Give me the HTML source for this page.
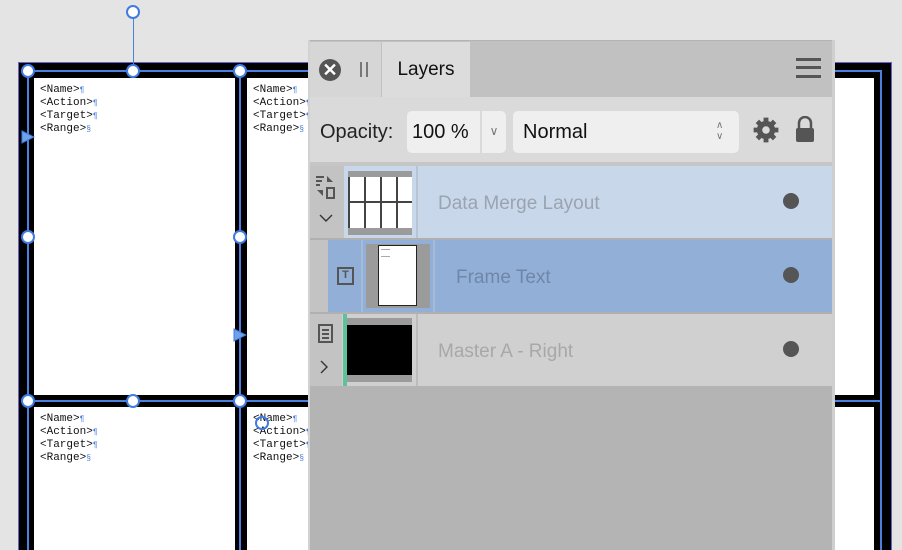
<!DOCTYPE html>
<html><head><meta charset="utf-8"><style>
body{margin:0;width:902px;height:550px;overflow:hidden;background:#e4e4e4;position:relative;font-family:"Liberation Sans",sans-serif}
.a{position:absolute}
.cell{position:absolute;background:#fff;font-family:"Liberation Mono",monospace;font-size:11px;line-height:13px;color:#111;padding:6px 0 0 6px;box-sizing:border-box}
.cell i{font-style:normal;color:#4a7fd6;font-size:8px}
.h{position:absolute;width:10px;height:10px;border:2px solid #3f7be0;border-radius:50%;background:#fff;margin:-7px 0 0 -7px}
.bl{position:absolute;background:#4a80e0}
.row{position:absolute;left:310px;width:522px;height:72px}
.name{position:absolute;font-size:19px;top:27px}
.dot{position:absolute;left:473px;top:27px;width:16px;height:16px;border-radius:50%;background:#555}
</style></head><body>
<div class="a" style="left:18px;top:62px;width:874px;height:488px;background:#000;border:1px solid #6a62c8;border-bottom:none;box-sizing:border-box"></div>
<div class="cell" style="left:34px;top:78px;width:201px;height:317px">&lt;Name&gt;<i>¶</i><br>&lt;Action&gt;<i>¶</i><br>&lt;Target&gt;<i>¶</i><br>&lt;Range&gt;<i>§</i></div>
<div class="cell" style="left:247px;top:78px;width:300px;height:317px">&lt;Name&gt;<i>¶</i><br>&lt;Action&gt;<i>¶</i><br>&lt;Target&gt;<i>¶</i><br>&lt;Range&gt;<i>§</i></div>
<div class="cell" style="left:34px;top:407px;width:201px;height:143px">&lt;Name&gt;<i>¶</i><br>&lt;Action&gt;<i>¶</i><br>&lt;Target&gt;<i>¶</i><br>&lt;Range&gt;<i>§</i></div>
<div class="cell" style="left:247px;top:407px;width:300px;height:143px">&lt;Name&gt;<i>¶</i><br>&lt;Action&gt;<i>¶</i><br>&lt;Target&gt;<i>¶</i><br>&lt;Range&gt;<i>§</i></div>
<div class="cell" style="left:835px;top:78px;width:39px;height:317px"></div>
<div class="cell" style="left:835px;top:407px;width:39px;height:143px"></div>
<div class="bl" style="left:28px;top:70px;width:854px;height:2px"></div>
<div class="bl" style="left:28px;top:400px;width:854px;height:2px"></div>
<div class="bl" style="left:27px;top:71px;width:2px;height:479px"></div>
<div class="bl" style="left:239px;top:71px;width:2px;height:479px"></div>
<div class="bl" style="left:880px;top:71px;width:2px;height:479px"></div>
<div class="bl" style="left:133px;top:14px;width:1px;height:57px"></div>
<div class="h" style="left:133px;top:12px"></div>
<div class="h" style="left:28px;top:71px"></div><div class="h" style="left:133px;top:71px"></div><div class="h" style="left:240px;top:71px"></div>
<div class="h" style="left:28px;top:237px"></div><div class="h" style="left:240px;top:237px"></div>
<div class="h" style="left:28px;top:401px"></div><div class="h" style="left:133px;top:401px"></div><div class="h" style="left:240px;top:401px"></div>
<div class="h" style="left:262px;top:423px;background:transparent"></div>
<svg class="a" style="left:21px;top:130px" width="14" height="14"><path d="M1 1L13 7L1 13Z" fill="#6fa0ea" stroke="#3f7be0"/></svg>
<svg class="a" style="left:233px;top:328px" width="14" height="14"><path d="M1 1L13 7L1 13Z" fill="#6fa0ea" stroke="#3f7be0"/></svg>

<div class="a" style="left:308px;top:40px;width:527px;height:510px;background:#b4b4b4;border-left:2px solid #d2d2d2;border-right:3px solid #cfcfcf;box-sizing:border-box"></div>
<div class="a" style="left:310px;top:41px;width:522px;height:56px;background:#c1c1c1"></div>
<div class="a" style="left:310px;top:42px;width:71px;height:56px;background:#d6d6d6"></div>
<div class="a" style="left:382px;top:42px;width:88px;height:56px;background:#dcdcdc;font-size:19px;line-height:56px;text-align:center;color:#111">Layers</div>
<div class="a" style="left:319px;top:59px;width:22px;height:22px;border-radius:50%;background:#555;color:#fff;text-align:center;line-height:22px;font-size:18px;font-weight:bold">✕</div>
<div class="a" style="left:360px;top:62px;width:2px;height:15px;background:#777"></div>
<div class="a" style="left:366px;top:62px;width:2px;height:15px;background:#777"></div>
<div class="a" style="left:796px;top:58px;width:25px;height:3px;background:#555"></div>
<div class="a" style="left:796px;top:66px;width:25px;height:3px;background:#555"></div>
<div class="a" style="left:796px;top:75px;width:25px;height:3px;background:#555"></div>
<div class="a" style="left:310px;top:97px;width:522px;height:65px;background:#dadada"></div>
<div class="a" style="left:320px;top:121px;font-size:20px;color:#222">Opacity:</div>
<div class="a" style="left:407px;top:111px;width:73px;height:42px;background:#efefef;border-radius:5px 0 0 5px;font-size:20px;line-height:42px;padding-left:5px;box-sizing:border-box;color:#111">100 %</div>
<div class="a" style="left:482px;top:111px;width:24px;height:42px;background:#efefef;border-radius:0 5px 5px 0;color:#777;text-align:center;line-height:40px;font-size:12px">∨</div>
<div class="a" style="left:513px;top:111px;width:226px;height:42px;background:#efefef;border-radius:5px;font-size:20px;line-height:42px;padding-left:10px;box-sizing:border-box;color:#111">Normal</div>
<div class="a" style="left:716px;top:120px;color:#777;font-size:10px;line-height:11px">∧<br>∨</div>
<svg class="a" style="left:752px;top:116px" width="28" height="28" viewBox="0 0 26 26"><g fill="#555"><circle cx="13" cy="13" r="8.5"/><g stroke="#555" stroke-width="4.5"><path d="M13 1.5V24.5M1.5 13H24.5M5 5L21 21M21 5L5 21"/></g></g><circle cx="13" cy="13" r="3.5" fill="#dadada"/></svg>
<svg class="a" style="left:795px;top:116px" width="20" height="27"><path d="M4 12V7a6 6 0 0 1 12 0V12" fill="none" stroke="#555" stroke-width="2.5"/><rect x="1" y="12" width="18" height="14" rx="2" fill="#555"/></svg>

<div class="a" style="left:310px;top:162px;width:522px;height:4px;background:#c6c6c6"></div>
<div class="row" style="top:166px;background:#c9d7ea">
 <div class="a" style="left:0;top:0;width:34px;height:72px;background:#c3c3c3"></div>
 <div class="a" style="left:106px;top:0;width:2px;height:72px;background:#b8c4d4"></div>
 <div class="a" style="left:38px;top:5px;width:64px;height:64px;background:#9b9b9b"></div>
 <div class="a" style="left:38px;top:11px;width:64px;height:51px;background:#fff;background-image:linear-gradient(90deg,#444 2px,transparent 2px);background-size:16px 100%"></div>
 <div class="a" style="left:38px;top:35px;width:64px;height:2px;background:#444"></div>
 <svg class="a" style="left:5px;top:8px" width="24" height="56"><g fill="#555"><rect x="1" y="2" width="8" height="2"/><rect x="1" y="6" width="6" height="2"/><rect x="1" y="10" width="4" height="2"/><path d="M12 2L18 8H12Z"/><path d="M2 16L8 16L8 22Z"/></g><rect x="12" y="14" width="7" height="10" fill="none" stroke="#555" stroke-width="2"/><path d="M5 41L11 47L17 41" fill="none" stroke="#333" stroke-width="1.4"/></svg>
 <div class="name" style="left:128px;color:#9aa4b1">Data Merge Layout</div>
 <div class="dot"></div>
</div>
<div class="a" style="left:310px;top:238px;width:522px;height:2px;background:#b0b0b0"></div>
<div class="row" style="top:240px;background:#92b0d7">
 <div class="a" style="left:0;top:0;width:18px;height:72px;background:#c3c3c3"></div>
 <div class="a" style="left:51px;top:0;width:2px;height:72px;background:#a5bcd9"></div>
 <div class="a" style="left:123px;top:0;width:2px;height:72px;background:#a5bcd9"></div>
 <div class="a" style="left:56px;top:4px;width:64px;height:64px;background:#9b9b9b"></div>
 <div class="a" style="left:68px;top:5px;width:39px;height:61px;background:#fff;border:1px solid #222;box-sizing:border-box"></div>
 <div class="a" style="left:71px;top:9px;width:9px;height:6px;border-top:1px solid #aaa;border-bottom:1px solid #aaa"></div>
 <div class="a" style="left:27px;top:27px;width:13px;height:14px;border:2px solid #555"></div>
 <div class="a" style="left:29px;top:27px;width:13px;text-align:center;font-size:11px;font-weight:bold;color:#555;line-height:17px">T</div>
 <div class="name" style="left:146px;color:#6f86a6">Frame Text</div>
 <div class="dot"></div>
</div>
<div class="a" style="left:310px;top:312px;width:522px;height:2px;background:#b0b0b0"></div>
<div class="row" style="top:314px;background:#d0d0d0">
 <div class="a" style="left:0;top:0;width:32px;height:72px;background:#c3c3c3"></div>
 <div class="a" style="left:33px;top:0;width:4px;height:72px;background:#5dc19a"></div>
 <div class="a" style="left:106px;top:0;width:2px;height:72px;background:#bcbcbc"></div>
 <div class="a" style="left:37px;top:4px;width:65px;height:64px;background:#9b9b9b"></div>
 <div class="a" style="left:37px;top:11px;width:65px;height:50px;background:#000"></div>
 <svg class="a" style="left:6px;top:10px" width="22" height="56"><rect x="3" y="1" width="13" height="17" fill="none" stroke="#555" stroke-width="2"/><g fill="#555"><rect x="6" y="5" width="7" height="2"/><rect x="6" y="9" width="7" height="2"/><rect x="6" y="13" width="7" height="2"/></g><path d="M5 37L11 43L5 49" fill="none" stroke="#333" stroke-width="1.4"/></svg>
 <div class="name" style="left:128px;color:#a8a8a8">Master A - Right</div>
 <div class="dot"></div>
</div>
</body></html>
